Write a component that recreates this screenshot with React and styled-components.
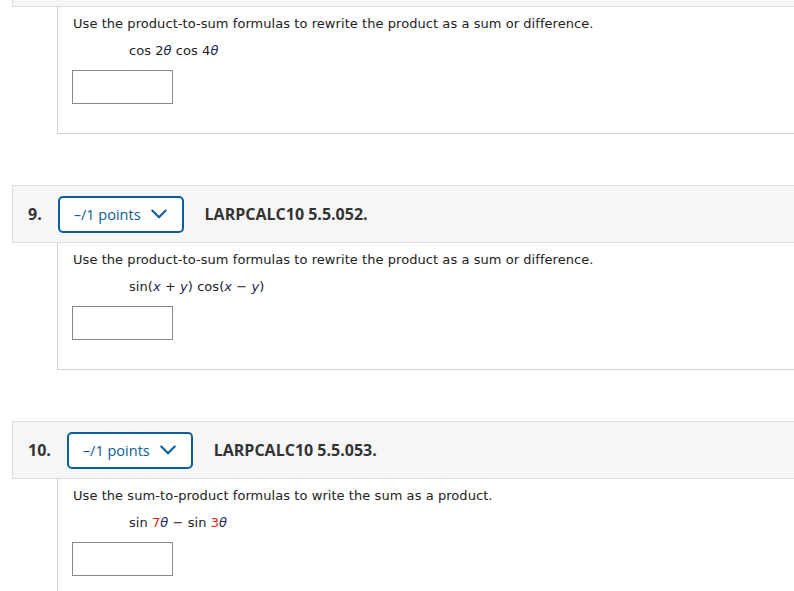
import React from 'react';
import styled, { createGlobalStyle } from 'styled-components';

const GlobalStyle = createGlobalStyle`
  html, body {
    margin: 0;
    padding: 0;
    background: #fff;
    overflow: hidden;
  }
  body {
    font-family: "DejaVu Sans", Verdana, sans-serif;
    color: #222;
  }
`;

const Page = styled.div`
  width: 840px;
  padding-left: 12px;
`;

const Question = styled.section`
  margin-bottom: 51px;
`;

const Header = styled.div`
  display: flex;
  align-items: center;
  box-sizing: border-box;
  height: ${p => (p.tail ? '7px' : '58px')};
  padding-left: 15px;
  background: #f6f6f6;
  border: 1px solid #dedede;
  border-top-width: ${p => (p.tail ? 0 : '1px')};
  font-family: "Open Sans", sans-serif;
`;

const Number = styled.span`
  font-size: 16px;
  font-weight: 700;
  color: #333;
  margin-right: 16px;
`;

const PointsButton = styled.button`
  display: flex;
  align-items: center;
  gap: 10px;
  box-sizing: border-box;
  height: 37px;
  padding: 0 15px 0 14px;
  background: #fff;
  border: 2px solid #0b5e99;
  border-radius: 5px;
  color: #0b5e99;
  font-family: "Open Sans", sans-serif;
  font-size: 14.5px;
  cursor: pointer;
`;

const Title = styled.h2`
  margin: 0 0 0 21px;
  font-size: 16px;
  font-weight: 700;
  color: #333;
`;

const Body = styled.div`
  margin-left: 45px;
  padding: 9px 0 29px 15px;
  border-left: 1px solid #cfcfcf;
  border-bottom: 1px solid #cfcfcf;
`;

const Prompt = styled.p`
  margin: 0;
  font-size: 13px;
  line-height: 16px;
  letter-spacing: 0.06px;
`;

const Expression = styled.div`
  margin: 11px 0 0 56px;
  font-size: 13px;
  line-height: 16px;
  letter-spacing: 0.06px;
`;

const Var = styled.i`
  color: #1e2a55;
`;

const Red = styled.span`
  color: #e8201a;
`;

const AnswerBox = styled.input`
  display: block;
  box-sizing: border-box;
  width: 101px;
  height: 34px;
  margin: 11px 0 0 -1px;
  border: 1px solid #888;
  border-radius: 0;
  background: #fff;
  outline: none;
`;

const Chevron = () => (
  <svg width="16" height="10" viewBox="0 0 16 10" fill="none">
    <path d="M1.3 1.5 L8 8.2 L14.7 1.5" stroke="#0b5e99" strokeWidth="2.1" strokeLinecap="round" strokeLinejoin="round" />
  </svg>
);

const theta = <Var>θ</Var>;

const questions = [
  {
    num: '9.',
    code: 'LARPCALC10 5.5.052.',
    prompt: 'Use the product-to-sum formulas to rewrite the product as a sum or difference.',
    expr: (
      <>
        sin(<Var>x</Var> + <Var>y</Var>) cos(<Var>x</Var> − <Var>y</Var>)
      </>
    ),
  },
  {
    num: '10.',
    code: 'LARPCALC10 5.5.053.',
    prompt: 'Use the sum-to-product formulas to write the sum as a product.',
    expr: (
      <>
        sin <Red>7</Red>{theta} − sin <Red>3</Red>{theta}
      </>
    ),
  },
];

const QuestionBody = ({ prompt, expr }) => (
  <Body>
    <Prompt>{prompt}</Prompt>
    <Expression>{expr}</Expression>
    <AnswerBox type="text" aria-label="answer" />
  </Body>
);

export default function App() {
  return (
    <>
      <GlobalStyle />
      <Page>
        <Question>
          <Header tail />
          <QuestionBody
            prompt="Use the product-to-sum formulas to rewrite the product as a sum or difference."
            expr={<>cos 2{theta} cos 4{theta}</>}
          />
        </Question>
        {questions.map(q => (
          <Question key={q.num}>
            <Header>
              <Number>{q.num}</Number>
              <PointsButton>
                <span>–/1 points</span>
                <Chevron />
              </PointsButton>
              <Title>{q.code}</Title>
            </Header>
            <QuestionBody prompt={q.prompt} expr={q.expr} />
          </Question>
        ))}
      </Page>
    </>
  );
}
